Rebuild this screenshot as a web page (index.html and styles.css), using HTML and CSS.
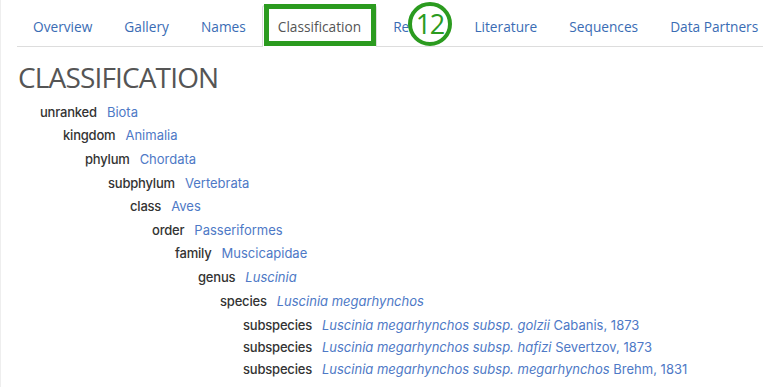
FILE: index.html
```html
<!DOCTYPE html>
<html>
<head>
<meta charset="utf-8">
<link rel="stylesheet" href="styles.css">
</head>
<body>
<div class="page">
  <nav class="tabs">
    <a class="tab">Overview</a>
    <a class="tab">Gallery</a>
    <a class="tab">Names</a>
    <a class="tab active">Classification<span class="mark-box"></span></a>
    <a class="tab">Re<span class="hidden">views</span><span class="badge">12</span></a>
    <a class="tab">Literature</a>
    <a class="tab">Sequences</a>
    <a class="tab">Data Partners</a>
  </nav>
  <h1 class="title">CLASSIFICATION</h1>
  <ul class="tree">
    <li class="row l0"><span class="rank">unranked</span><a class="name">Biota</a></li>
    <li class="row l1"><span class="rank">kingdom</span><a class="name">Animalia</a></li>
    <li class="row l2"><span class="rank">phylum</span><a class="name">Chordata</a></li>
    <li class="row l3"><span class="rank">subphylum</span><a class="name">Vertebrata</a></li>
    <li class="row l4"><span class="rank">class</span><a class="name">Aves</a></li>
    <li class="row l5"><span class="rank">order</span><a class="name">Passeriformes</a></li>
    <li class="row l6"><span class="rank">family</span><a class="name">Muscicapidae</a></li>
    <li class="row l7"><span class="rank">genus</span><a class="name"><i>Luscinia</i></a></li>
    <li class="row l8"><span class="rank">species</span><a class="name"><i>Luscinia megarhynchos</i></a></li>
    <li class="row l9 sub"><span class="rank">subspecies</span><a class="name"><i>Luscinia megarhynchos subsp. golzii</i> Cabanis, 1873</a></li>
    <li class="row l9 sub"><span class="rank">subspecies</span><a class="name"><i>Luscinia megarhynchos subsp. hafizi</i> Severtzov, 1873</a></li>
    <li class="row l9 sub"><span class="rank">subspecies</span><a class="name"><i>Luscinia megarhynchos subsp. megarhynchos</i> Brehm, 1831</a></li>
  </ul>
</div>
</body>
</html>
```
FILE: styles.css
```css
html, body {
  margin: 0;
  padding: 0;
  background: #fff;
}
body {
  overflow: hidden;
  width: 763px;
  height: 387px;
}
.page {
  border-left: 1px solid #eee;
  height: 387px;
  box-sizing: border-box;
  padding-left: 16px;
}
.tabs {
  display: flex;
  height: 47px;
  padding-top: 5px;
  box-sizing: border-box;
  border-bottom: 1px solid #ddd;
  font-family: "Open Sans", sans-serif;
  font-size: 13.7px;
  white-space: nowrap;
}
.tab {
  position: relative;
  display: block;
  padding: 11px 15px 0;
  color: #3a6cb4;
  border: 1px solid transparent;
  border-bottom: none;
  height: 41px;
  box-sizing: border-box;
}
.tab.active {
  color: #555;
  border-color: #ddd;
  background: #fff;
  height: 42px;
  margin-bottom: -1px;
  border-radius: 3px 3px 0 0;
}
.mark-box {
  position: absolute;
  left: 1px;
  top: -2px;
  width: 112px;
  height: 42px;
  border: 5px solid #2b9b1f;
  box-sizing: border-box;
}
.hidden {
  color: #3a6cb4;
  letter-spacing: -0.4px;
}
.badge {
  position: absolute;
  left: 30px;
  top: -4px;
  width: 44px;
  height: 44px;
  border: 4px solid #2b9b1f;
  border-radius: 50%;
  background: #fff;
  box-sizing: border-box;
  color: #2b9b1f;
  font-family: "Open Sans", sans-serif;
  font-size: 27px;
  line-height: 35px;
  text-align: center;
  letter-spacing: -1.5px;
  text-indent: -1px;
}
.title {
  margin: 15px 0 0 1px;
  font-family: "Open Sans", sans-serif;
  font-weight: 400;
  font-size: 28px;
  line-height: 30px;
  color: #555;
  letter-spacing: -0.85px;
}
.tree {
  list-style: none;
  margin: 8px 0 0;
  padding: 0;
  font-family: Inter, "Noto Sans", sans-serif;
  font-size: 13px;
}
.row {
  display: flex;
  height: 23.6px;
  align-items: center;
}
.row.sub {
  height: 21.8px;
}
.l8 + .l9 {
  margin-top: 2px;
}
.rank {
  color: #333;
  font-weight: 500;
  margin-right: 10px;
  letter-spacing: -0.2px;
}
.name {
  color: #4e79c6;
}
.l0 { padding-left: 23px; }
.l1 { padding-left: 46px; }
.l2 { padding-left: 68px; }
.l3 { padding-left: 91px; }
.l4 { padding-left: 113px; }
.l5 { padding-left: 135px; }
.l6 { padding-left: 158px; }
.l7 { padding-left: 181px; }
.l8 { padding-left: 203px; }
.l9 { padding-left: 226px; }
```
